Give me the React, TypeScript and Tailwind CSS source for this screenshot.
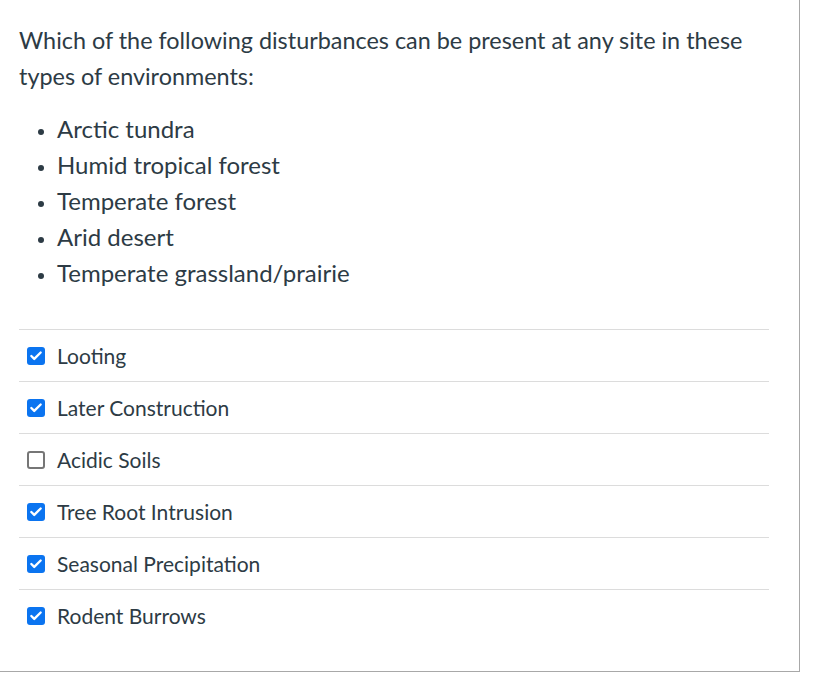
import { Check } from "lucide-react";

const envs = [
  "Arctic tundra",
  "Humid tropical forest",
  "Temperate forest",
  "Arid desert",
  "Temperate grassland/prairie",
];

const options = [
  { label: "Looting", checked: true },
  { label: "Later Construction", checked: true },
  { label: "Acidic Soils", checked: false },
  { label: "Tree Root Intrusion", checked: true },
  { label: "Seasonal Precipitation", checked: true },
  { label: "Rodent Burrows", checked: true },
];

function Box({ checked }: { checked: boolean }) {
  if (checked) {
    return (
      <span className="w-[18px] h-[18px] rounded-[3px] bg-[#0b74f0] flex items-center justify-center shrink-0">
        <Check className="w-[14px] h-[14px] text-white" strokeWidth={4} />
      </span>
    );
  }
  return <span className="w-[18px] h-[18px] rounded-[3px] border-2 border-[#767676] bg-white shrink-0" />;
}

export default function App() {
  return (
    <div className="w-[800px] h-[672px] bg-white border-r border-b border-[#a8a8a8] text-[#2d3b45] font-['Lato',sans-serif]">
      <div className="pl-[19px] pr-[30px] pt-[22px]">
        <p className="text-[23.4px] leading-[36px]">
          Which of the following disturbances can be present at any site in these types of environments:
        </p>
        <ul className="mt-[17px] list-disc pl-[38px] text-[24px] leading-[36px] marker:text-[18px]">
          {envs.map((e) => (
            <li key={e}>{e}</li>
          ))}
        </ul>
        <div className="mt-[38px]">
          {options.map((o) => (
            <div key={o.label} className="h-[52px] border-t border-[#dcdcdc] flex items-center pl-[8px] gap-[12px]">
              <Box checked={o.checked} />
              <span className="text-[21px]">{o.label}</span>
            </div>
          ))}
        </div>
      </div>
    </div>
  );
}
